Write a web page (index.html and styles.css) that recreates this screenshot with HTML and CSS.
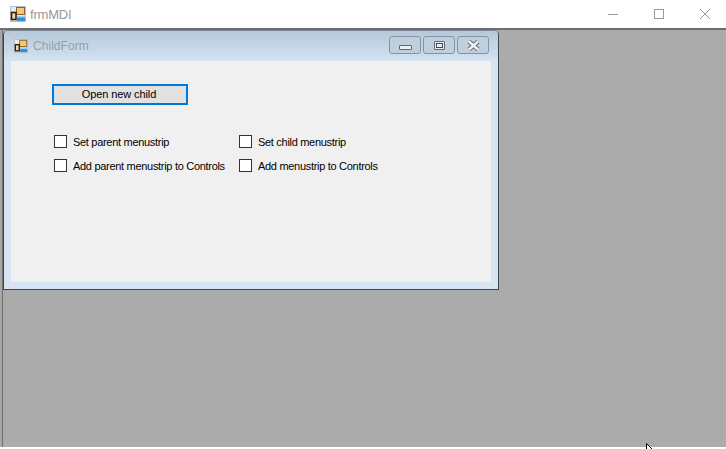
FILE: index.html
```html
<!DOCTYPE html>
<html lang="en">
<head>
<meta charset="utf-8">
<title>frmMDI</title>
<link rel="stylesheet" href="styles.css">
</head>
<body>
<svg class="defs" width="0" height="0" aria-hidden="true">
  <symbol id="app" viewBox="0 0 16 16">
    <rect x="0.5" y="0.5" width="15" height="15" fill="#e6ebf1" stroke="#b4bfcd"/>
    <rect x="6.5" y="1.5" width="8" height="7" fill="#f5c878" stroke="#8a6327"/>
    <rect x="1.5" y="6.5" width="4.5" height="7" fill="#f3d9a4" stroke="#33200c" stroke-width="1.6"/>
    <rect x="7" y="10" width="8" height="5" fill="#2f8fdc"/>
    <rect x="7" y="10" width="8" height="1.5" fill="#a4d2f2"/>
  </symbol>
</svg>
<div class="mdi">
  <header class="mdi-title">
    <svg class="app-icon" width="16" height="16"><use href="#app"/></svg>
    <span class="mdi-name">frmMDI</span>
    <div class="mdi-controls">
      <svg width="12" height="12" viewBox="0 0 12 12"><path d="M1 6.5h10" stroke="#9a9a9a" fill="none"/></svg>
      <svg width="12" height="12" viewBox="0 0 12 12"><rect x="1.5" y="1.5" width="9" height="9" stroke="#9a9a9a" fill="none"/></svg>
      <svg width="12" height="12" viewBox="0 0 12 12"><path d="M1 1l10 10M11 1L1 11" stroke="#9a9a9a" fill="none"/></svg>
    </div>
  </header>
  <main class="mdi-client">
    <div class="mdi-inner">
      <section class="child">
        <div class="child-title">
          <svg class="app-icon" width="14" height="14"><use href="#app"/></svg>
          <span class="child-name">ChildForm</span>
          <div class="child-controls">
            <button class="ctl" type="button" aria-label="Minimize"><span class="glyph-min"></span></button>
            <button class="ctl" type="button" aria-label="Restore"><span class="glyph-res"></span></button>
            <button class="ctl" type="button" aria-label="Close">
              <svg width="15" height="11" viewBox="0 0 15 11"><path d="M3 1.5l9 8M12 1.5l-9 8" stroke="#5f6872" stroke-width="4.4" fill="none"/><path d="M3 1.5l9 8M12 1.5l-9 8" stroke="#f1f3f5" stroke-width="2.4" fill="none"/></svg>
            </button>
          </div>
        </div>
        <div class="child-body">
          <button class="open-btn" type="button">Open new child</button>
          <div class="checks">
            <label class="check"><span class="box"></span>Set parent menustrip</label>
            <label class="check"><span class="box"></span>Set child menustrip</label>
            <label class="check"><span class="box"></span>Add parent menustrip to Controls</label>
            <label class="check"><span class="box"></span>Add menustrip to Controls</label>
          </div>
        </div>
      </section>
      <svg class="cursor" width="9" height="6" viewBox="0 0 9 6"><path d="M0.5 0.5v8l2-2h4z" fill="#fff" stroke="#000"/></svg>
    </div>
  </main>
</div>
</body>
</html>
```

FILE: styles.css
```css
* { box-sizing: border-box; }
html, body { margin: 0; height: 100%; background: #fff; overflow: hidden; }
body { font-family: "Liberation Sans", Arial, sans-serif; font-size: 11px; color: #000; }
.defs { position: absolute; }
.mdi { width: 726px; height: 449px; display: flex; flex-direction: column; }
.mdi-title { height: 28px; display: flex; align-items: center; padding-left: 10px; background: #fff; flex: none; }
.app-icon { flex: none; }
.mdi-name { margin-left: 4px; font-size: 13px; letter-spacing: -0.2px; color: #979797; }
.mdi-controls { margin-left: auto; display: flex; gap: 34px; padding-right: 15px; }
.mdi-client { height: 419px; padding-left: 2px; background: #a8a8a8; border-top: 2px solid #6e6e6e; flex: none; }
.mdi-inner { position: relative; height: 100%; background: #ababab; border-left: 1px solid #6e6e6e; }
.child { width: 496px; height: 260px; border: 1px solid #41464d; border-top-color: #7c8896; border-radius: 5px 5px 0 0; background: #d7e4f2; display: flex; flex-direction: column; }
.child-title { height: 30px; flex: none; display: flex; align-items: center; padding-left: 10px; border-radius: 4px 4px 0 0; background: linear-gradient(#b6c8d9, #d4e2f1); }
.child-name { margin-left: 5px; font-size: 12px; color: #949ea8; letter-spacing: 0.05px; }
.child-controls { margin-left: auto; margin-right: 9px; margin-top: -2px; display: flex; gap: 2px; }
.ctl { width: 32px; height: 18px; padding: 0; border: 1px solid #8793a5; border-radius: 3px; background: #c0cfde; display: flex; align-items: center; justify-content: center; }
.glyph-min { width: 13px; height: 5px; margin-top: 4px; border: 1px solid #5f6872; background: #eceff2; border-radius: 1px; }
.glyph-res { width: 11px; height: 9px; border: 1px solid #5f6872; background: #eceff2; display: flex; align-items: center; justify-content: center; border-radius: 1px; }
.glyph-res::after { content: ""; width: 5px; height: 3px; border: 1px solid #3f4852; }
.child-body { height: 221px; margin: 0 7px; background: #f0f0f0; padding: 23px 0 0 41px; }
.open-btn { display: block; width: 136px; height: 21px; padding: 0 2px 1px 0; border: 2px solid #0078d7; background: #e1e1e1; font: 11px "Liberation Sans", Arial, sans-serif; letter-spacing: -0.1px; color: #000; }
.checks { display: grid; grid-template-columns: 185px auto; row-gap: 11px; margin-top: 30px; margin-left: 2px; justify-content: start; letter-spacing: -0.3px; }
.check { display: flex; align-items: center; height: 13px; white-space: nowrap; }
.box { width: 13px; height: 13px; margin-right: 6px; border: 1px solid #333; background: #fff; flex: none; }
.cursor { position: absolute; left: 643px; top: 413px; }
```
